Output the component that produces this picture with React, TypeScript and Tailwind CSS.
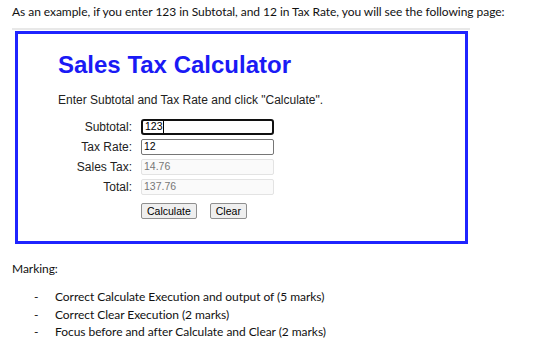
const doc = { fontFamily: "Lato, 'Open Sans', sans-serif" };
const arial = { fontFamily: "'Liberation Sans', Arial, sans-serif" };

function Row({ label, value, focused, disabled }: { label: string; value: string; focused?: boolean; disabled?: boolean }) {
  let box = "border border-[#767676] bg-white text-black rounded-[2px]";
  if (focused) box = "border-2 border-[#101010] bg-white text-black rounded-[3px]";
  if (disabled) box = "border border-[#e3e3e3] bg-[#fafafa] text-[#777] rounded-[2px]";
  return (
    <div className="flex items-center h-[20px]">
      <div className="w-[75px] text-right text-[12px] text-[#222] pr-[9px]">{label}</div>
      <div className={`w-[133px] h-[16px] flex items-center px-[2px] text-[10.5px] ${box}`}>
        {value}
        {focused && <span className="w-px h-[12px] bg-black" />}
      </div>
    </div>
  );
}

export default function App() {
  return (
    <div className="w-[547px] h-[358px] bg-white text-[#111] overflow-hidden tracking-[-0.05px]" style={doc}>
      <div className="pl-[12px] pt-[4px] text-[12px] leading-[16px] whitespace-nowrap">
        As an example, if you enter 123 in Subtotal, and 12 in Tax Rate, you will see the following page:
      </div>
      <div className="ml-[12px] mt-[8px] w-[458px] h-[2px] bg-[#e8e8e8]" />
      <div className="ml-[15px] mt-[1px] w-[453px] h-[213px] border-[3px] border-[#1f24ff] tracking-normal" style={arial}>
        <div className="pl-[40px] pt-[17px] text-[24px] leading-[28px] font-bold text-[#1a1af5]">Sales Tax Calculator</div>
        <div className="pl-[40px] mt-[14px] text-[12px] leading-[14px] text-[#222]">
          Enter Subtotal and Tax Rate and click "Calculate".
        </div>
        <div className="pl-[48px] mt-[10px] flex flex-col">
          <Row label="Subtotal:" value="123" focused />
          <Row label="Tax Rate:" value="12" />
          <Row label="Sales Tax:" value="14.76" disabled />
          <Row label="Total:" value="137.76" disabled />
          <div className="flex gap-[13px] pl-[75px] mt-[6px]">
            <button className="h-[16px] px-[5px] text-[10.5px] leading-none text-black bg-[#efefef] border border-[#8f8f8f] rounded-[2px]">
              Calculate
            </button>
            <button className="h-[16px] px-[5px] text-[10.5px] leading-none text-black bg-[#efefef] border border-[#8f8f8f] rounded-[2px]">
              Clear
            </button>
          </div>
        </div>
      </div>
      <div className="pl-[12px] mt-[17px] text-[12px] leading-[16px]">Marking:</div>
      <ul className="mt-[11px] text-[12px] leading-[17.5px]">
        <li className="flex">
          <span className="w-[55px] pl-[34px]">-</span>
          <span>Correct Calculate Execution and output of (5 marks)</span>
        </li>
        <li className="flex">
          <span className="w-[55px] pl-[34px]">-</span>
          <span>Correct Clear Execution (2 marks)</span>
        </li>
        <li className="flex">
          <span className="w-[55px] pl-[34px]">-</span>
          <span>Focus before and after Calculate and Clear (2 marks)</span>
        </li>
      </ul>
    </div>
  );
}
